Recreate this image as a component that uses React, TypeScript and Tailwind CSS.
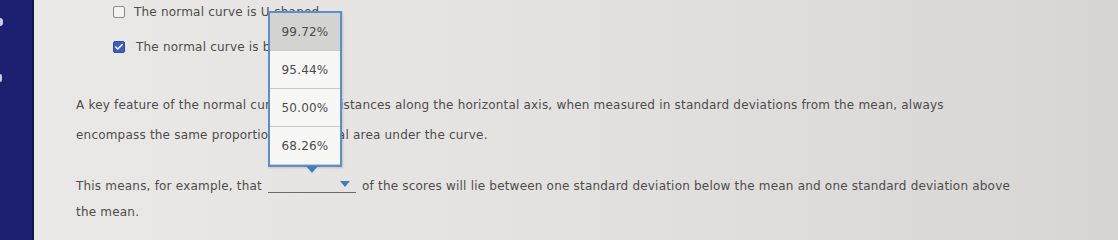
import { Check } from 'lucide-react';

const options = ['99.72%', '95.44%', '50.00%', '68.26%'];

function Box({ checked }: { checked?: boolean }) {
  return checked ? (
    <span className="inline-flex items-center justify-center w-[12px] h-[12px] rounded-[2px] bg-[#3d5fc4] border border-[#2f4ea8]">
      <Check size={10} strokeWidth={3.5} className="text-white" />
    </span>
  ) : (
    <span className="inline-block w-[12px] h-[12px] rounded-[2px] border border-[#8a8a8a] bg-[#f4f3f1]" />
  );
}

export default function App() {
  return (
    <div
      className="relative flex w-[1118px] h-[240px] overflow-hidden bg-gradient-to-r from-[#ebe9e7] via-[#e4e2e0] to-[#d8d6d4] text-[12px] tracking-[0.2px] text-[#4c4c4c]"
      style={{ fontFamily: '"DejaVu Sans", Verdana, sans-serif' }}
    >
      {/* left nav strip */}
      <div className="relative w-[34px] shrink-0 bg-[#1d1f70] border-r-2 border-[#131547]">
        <span className="absolute left-0 top-[18px] w-[3px] h-[8px] rounded-r bg-[#c9cbe6]" />
        <span className="absolute left-0 top-[74px] w-[2px] h-[8px] rounded-r bg-[#c9cbe6]" />
      </div>

      <div className="flex flex-col pl-[42px]">
        {/* answer options */}
        <div className="flex flex-col pl-[37px] pt-[5px] gap-[22px]">
          <label className="flex items-center gap-[9px] h-[13px]">
            <Box />
            <span>The normal curve is U-shaped.</span>
          </label>
          <label className="flex items-center gap-[11px] h-[13px]">
            <Box checked />
            <span>The normal curve is bell-shaped.</span>
          </label>
        </div>

        <p className="mt-[37px] leading-[30px]">
          A key feature of the normal curve is that distances along the horizontal axis, when measured in standard deviations from the mean, always
          <br />
          encompass the same proportion of the total area under the curve.
        </p>

        <p className="mt-[23px] leading-[26px]">
          This means, for example, that
          <span className="relative inline-block align-baseline w-[88px] h-[14px] mx-[6px] border-b border-[#6b6b6b] translate-y-[3px]">
            <span className="absolute right-[6px] top-[2px] w-0 h-0 border-l-[5px] border-r-[5px] border-t-[6px] border-l-transparent border-r-transparent border-t-[#3c7fc4]" />
          </span>
          of the scores will lie between one standard deviation below the mean and one standard deviation above
          <br />
          the mean.
        </p>
      </div>

      {/* open dropdown list */}
      <div className="absolute left-[268px] top-[11px] w-[74px] border-2 border-[#5b8fcb] bg-[#f7f7f6] shadow-[1px_1px_2px_rgba(0,0,0,0.15)]">
        {options.map((o, i) => (
          <div
            key={o}
            className={`flex items-center justify-center h-[38px] border-b border-[#c9c9c9] last:border-b-0 ${i === 0 ? 'bg-[#d3d3d2]' : ''}`}
          >
            {o}
          </div>
        ))}
        <span className="absolute left-[36px] -bottom-[8px] w-0 h-0 border-l-[6px] border-r-[6px] border-t-[7px] border-l-transparent border-r-transparent border-t-[#3c7fc4]" />
      </div>
    </div>
  );
}
